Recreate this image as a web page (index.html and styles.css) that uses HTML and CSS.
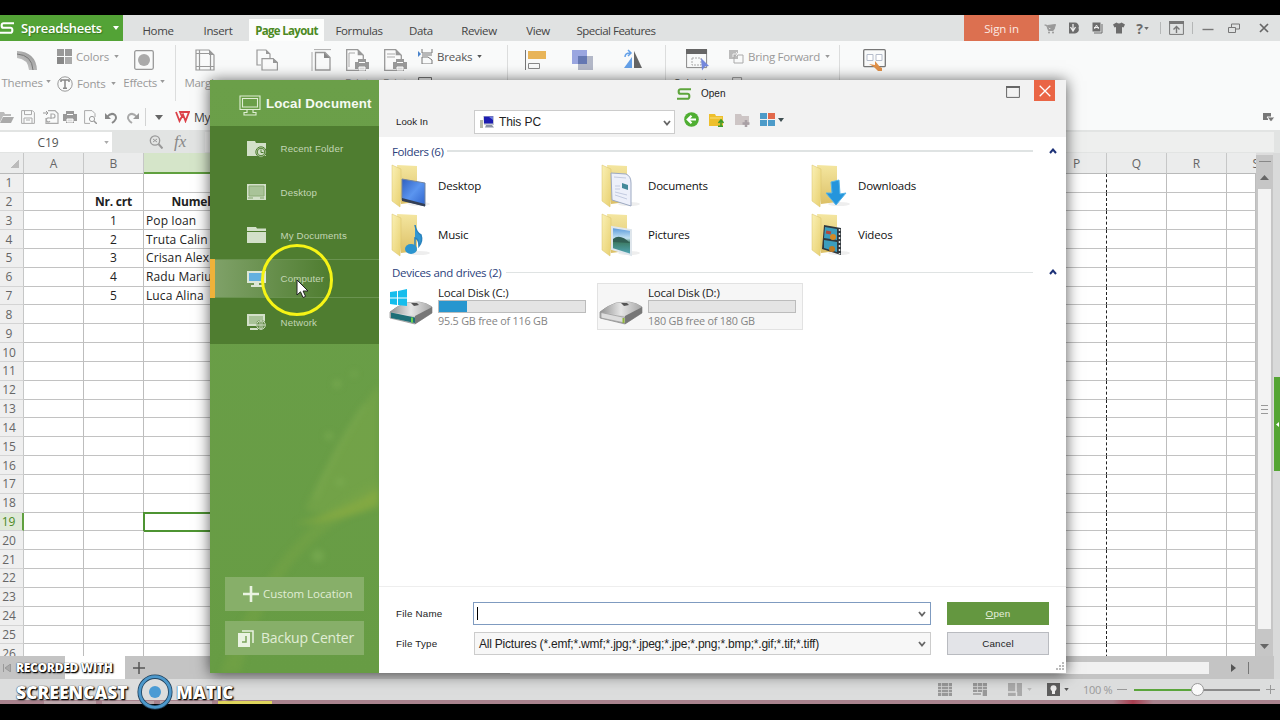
FILE: index.html
```html
<!DOCTYPE html>
<html lang="en">
<head>
    <meta charset="UTF-8">
    <meta name="viewport" content="width=device-width, initial-scale=1.0">
    <title>Spreadsheets</title>
    <link rel="stylesheet" href="styles.css">
</head>
<body>

<!-- shared symbols and gradients -->
<svg class="defs" width="0" height="0">
    <defs>
        <linearGradient id="gFront" x1="0" x2="1" y1="0" y2="1"><stop offset="0" stop-color="#faf0b4"/><stop offset="1" stop-color="#e8d070"/></linearGradient>
        <linearGradient id="gBack" x1="0" x2="0" y1="0" y2="1"><stop offset="0" stop-color="#f4e6a0"/><stop offset="1" stop-color="#dcc066"/></linearGradient>
        <linearGradient id="gScreen" x1="0" x2="1" y1="0" y2="1"><stop offset="0" stop-color="#2f5fc0"/><stop offset=".5" stop-color="#5b95ef"/><stop offset="1" stop-color="#2e63cc"/></linearGradient>
        <linearGradient id="gPic" x1="0" x2="0" y1="0" y2="1"><stop offset="0" stop-color="#4f92d8"/><stop offset=".4" stop-color="#c3e2f2"/><stop offset=".55" stop-color="#3d7c66"/><stop offset="1" stop-color="#52a9bd"/></linearGradient>
        <linearGradient id="gDisk" x1="0" x2="1" y1="0" y2="1"><stop offset="0" stop-color="#8d8d8d"/><stop offset=".5" stop-color="#dedede"/><stop offset="1" stop-color="#8f8f8f"/></linearGradient>
        <linearGradient id="gTop" x1="0" x2="1" y1="0" y2="0"><stop offset="0" stop-color="#8f8f8f"/><stop offset=".5" stop-color="#e6e6e6"/><stop offset="1" stop-color="#a5a5a5"/></linearGradient>
        <linearGradient id="gTheme" x1="0" x2="1" y1="1" y2="0"><stop offset="0" stop-color="#ddd"/><stop offset="1" stop-color="#888"/></linearGradient>
        <symbol id="folder" viewBox="0 0 42 46">
            <ellipse cx="28" cy="41" rx="11" ry="2" fill="#eee"/>
            <path d="M6 2l20 1v36l-16 2z" fill="url(#gBack)"/>
            <path d="M1 2l9 4v22l-1 16-8-6z" fill="url(#gFront)" stroke="#d9c36a" stroke-width=".5"/>
        </symbol>
        <symbol id="disk" viewBox="0 0 44 24">
            <path d="M1 11Q8 5 17 2l13-1q8 1 13 5v6L26 23 1 17z" fill="url(#gDisk)" stroke="#777" stroke-width=".6"/>
            <path d="M1 11Q8 5 17 2l13-1q8 1 13 5L26 15z" fill="url(#gTop)"/>
            <path d="M22 2h6l2 2-5 1z" fill="#555"/>
            <path d="M26 15l17-9v6L26 23z" fill="#777"/>
        </symbol>
        <symbol id="printer" viewBox="0 0 14 12">
            <path d="M3 0h8v3h3v7h-3v2H3v-2H0V3h3z" fill="#999"/><path d="M4 3.500h6M4 8h6v3H4z" stroke="#fff" fill="#ddd"/>
        </symbol>
        <symbol id="page" viewBox="0 0 18 22">
            <path d="M.7.7h11l5.600 5.600v15H.7z" fill="#fafafa" stroke="#999" stroke-width="1.300"/><path d="M11.700.7v5.600h5.600z" fill="#999"/>
        </symbol>
        <symbol id="wps" viewBox="0 0 14 12"><path d="M14 1.300H3.500a1.800 1.800 0 0 0-1.800 1.800V4a1.800 1.800 0 0 0 1.800 1.800h7A1.800 1.800 0 0 1 12.300 7.600v1.300a1.800 1.800 0 0 1-1.800 1.800H0" fill="none" stroke="currentColor" stroke-width="2.100"/></symbol>
        <symbol id="down" viewBox="0 0 6 4"><path d="M0 0h6L3 4z" fill="currentColor"/></symbol>
        <symbol id="chev" viewBox="0 0 8 6"><path d="M1 1l3 3.500L7 1" fill="none" stroke="currentColor" stroke-width="1.800"/></symbol>
    </defs>
</svg>

<div class="app">

    <!-- title bar with tabs -->
    <div class="titlebar">
        <div class="brand"><svg class="brand-logo" width="14" height="12"><use href="#wps"/></svg><span>Spreadsheets</span><svg class="brand-arrow" width="6" height="4"><use href="#down"/></svg></div>
        <div class="tabs">
            <span class="tab">Home</span>
            <span class="tab">Insert</span>
            <span class="tab active">Page Layout</span>
            <span class="tab">Formulas</span>
            <span class="tab">Data</span>
            <span class="tab">Review</span>
            <span class="tab">View</span>
            <span class="tab">Special Features</span>
        </div>
        <div class="signin">Sign in</div>
        <div class="tools">
            <svg width="12" height="12" viewBox="0 0 12 12"><path d="M.5 3h2l2 5.500h5M3.500 3.500l8-1-1.500 5H4.800z" fill="#999" stroke="#999"/><circle cx="5" cy="10.500" r="1" fill="#999"/><circle cx="9" cy="10.500" r="1" fill="#999"/></svg>
            <svg width="11" height="12" viewBox="0 0 11 12"><path d="M1 .5h5a4 4 0 0 1 4.500 5.500A4 4 0 0 1 6 11.500H1z" fill="#6c6c6c"/><path d="M5 2v7M2.500 5L5 9l2.500-4" stroke="#eee" fill="none" stroke-width="1.300"/></svg>
            <svg width="11" height="12" viewBox="0 0 11 12"><path d="M.5.5h8v9h-8z" fill="#6c6c6c"/><path d="M10 2v9H2" stroke="#6c6c6c" fill="none"/><path d="M2.500 7l2-4 2 4M2 5.500h5" stroke="#eee" fill="none"/></svg>
            <svg width="12" height="12" viewBox="0 0 12 12"><path d="M3.500.5Q6 2.500 8.500.5L12 2.500 10.500 5.500 9 5v6.500H3V5l-1.500.5L0 2.500z" fill="#6c6c6c"/></svg>
            <span class="help">?<svg width="5" height="3"><use href="#down"/></svg></span>
            <i></i>
            <svg width="15" height="14" viewBox="0 0 15 14"><path d="M.6.6h13.800v12.800H.6z" fill="none" stroke="#777"/><path d="M0 0h15v3H0z" fill="#777"/><path d="M7.500 12V5.500M4.500 8.500l3-3 3 3" fill="none" stroke="#777" stroke-width="1.400"/></svg>
            <i></i>
            <svg width="12" height="12" viewBox="0 0 12 12"><path d="M.5 7.500h11" stroke="#777" stroke-width="1.400"/></svg>
            <svg width="12" height="12" viewBox="0 0 12 12"><path d="M.5 5.500h7v5h-7zM3.500 5V2h8v5H8" fill="none" stroke="#777"/></svg>
            <svg width="10" height="10" viewBox="0 0 10 10"><path d="M1 1l8 8M9 1L1 9" stroke="#666" stroke-width="1.700"/></svg>
        </div>
    </div>

    <!-- ribbon -->
    <div class="ribbon">
        <div class="big themes"><svg width="22" height="22" viewBox="0 0 22 22"><path d="M1 2q19 1 20 19h-8Q12 10 1 9z" fill="url(#gTheme)"/><path d="M1 5q15 1 16 16" stroke="#777" fill="none" stroke-width="1"/></svg><span>Themes <svg width="5" height="3"><use href="#down"/></svg></span></div>
        <div class="stack">
            <span><svg width="15" height="15" viewBox="0 0 15 15"><path d="M0 0h7v7H0zM8 0h7v7H8z" fill="#999"/><path d="M0 8h7v7H0z" fill="#888"/><path d="M8 8h7v7H8z" fill="#aaa"/></svg>Colors <svg width="5" height="3"><use href="#down"/></svg></span>
            <span><svg width="16" height="16" viewBox="0 0 16 16"><circle cx="8" cy="8" r="7.200" fill="none" stroke="#999"/><path d="M4 6V4h8v2M8 4v8M6 12.200h4" fill="none" stroke="#888" stroke-width="1.500"/></svg>Fonts <svg width="5" height="3"><use href="#down"/></svg></span>
        </div>
        <div class="big"><svg width="20" height="22" viewBox="0 0 20 22"><rect x=".7" y="1.700" width="18.600" height="18.600" rx="1.500" fill="none" stroke="#999" stroke-width="1.300"/><circle cx="10" cy="11" r="6" fill="#aaa"/></svg><span>Effects <svg width="5" height="3"><use href="#down"/></svg></span></div>
        <i></i>
        <div class="big"><svg width="20" height="22" viewBox="0 0 20 22"><path d="M1 1h13l5 5v15H1zM4.500 1v20M15.500 5v16M1 4.500h14M1 17.500h18" fill="none" stroke="#999" stroke-width="1.200"/><path d="M14 1v5h5z" fill="#999"/></svg><span>Margins</span></div>
        <div class="big"><svg width="22" height="22" viewBox="0 0 22 22"><path d="M5 16H1V1h9l4 4v4" fill="none" stroke="#999" stroke-width="1.200"/><path d="M6 9.600h11l4.400 4V21H6z" fill="#fafafa" stroke="#999" stroke-width="1.200"/><path d="M17 9v5h5zM10 1v4h4z" fill="#999"/></svg></div>
        <div class="big"><svg width="20" height="22" viewBox="0 0 20 22"><path d="M1 3v19M3 .6h17" stroke="#aaa"/><path d="M4.500 3.500H14l5 5V21H4.500z" fill="none" stroke="#999" stroke-width="1.300"/><path d="M13 3.500V9h6z" fill="#888"/></svg></div>
        <div class="big"><svg width="23" height="22" viewBox="0 0 23 22"><use href="#page" width="18" height="22"/><path d="M3 4v14M3 4h6" stroke="#aaa" fill="none"/><use href="#printer" x="9" y="10" width="14" height="12"/></svg><span>Print</span></div>
        <div class="big"><svg width="23" height="22" viewBox="0 0 23 22"><use href="#page" width="18" height="22"/><path d="M3 5h8M3 8h8" stroke="#aaa"/><use href="#printer" x="9" y="10" width="14" height="12"/></svg><span>Print</span></div>
        <div class="stack dark">
            <span><svg width="15" height="15" viewBox="0 0 15 15"><path d="M4 0v4h10V0M4 15V8h6l4 3v4zM4 6h10" fill="none" stroke="#777"/><path d="M0 2l3 3-3 3z" fill="#4a84cc"/></svg>Breaks <svg width="5" height="3"><use href="#down"/></svg></span>
            <span><svg width="14" height="14" viewBox="0 0 14 14"><path d="M.6.6h13v13H.6zM5 4h4M7 3v3" fill="none" stroke="#666"/></svg></span>
        </div>
        <i></i>
        <div class="big"><svg width="22" height="22" viewBox="0 0 22 22"><path d="M1.500 1v20" stroke="#777"/><path d="M4 2h18v8H4z" fill="#e8b458"/><path d="M4.500 14.500h11v5h-11z" fill="none" stroke="#888"/></svg></div>
        <div class="big"><svg width="21" height="22" viewBox="0 0 21 22"><path d="M6 7h15v14H6z" fill="#b3b8c8"/><path d="M0 1h15v14H0z" fill="#9aa6e0"/><path d="M6 7h9v8H6z" fill="#6578b3"/></svg></div>
        <div class="big"><svg width="18" height="22" viewBox="0 0 18 22"><path d="M10 2l8 17h-8z" fill="#666"/><path d="M8 8v11H0z" fill="#64a0e8"/><path d="M1 8q0-4 5-4M4 1l3 3-3 3" fill="none" stroke="#64a0e8" stroke-width="1.500"/></svg></div>
        <i></i>
        <div class="big sel"><svg width="23" height="22" viewBox="0 0 23 22"><path d="M.6.6h20v18H.6z" fill="none" stroke="#888"/><path d="M0 0h21v5H0z" fill="#666"/><path d="M6 9h9v7H6z" fill="none" stroke="#aaa" stroke-dasharray="2 1"/><path d="M15 9l8 8-4 .5-3 4z" fill="#7488dd"/></svg><span>Selection</span></div>
        <div class="stack bring">
            <span><svg width="15" height="14" viewBox="0 0 15 14"><path d="M0 0h9v9H0z" fill="#bbb"/><path d="M5 5h9v8H5z" fill="none" stroke="#aaa"/><path d="M4 7V4h5M7 2l2 2-2 2" stroke="#eee" fill="none"/></svg>Bring Forward <svg width="5" height="3"><use href="#down"/></svg></span>
            <span><svg width="14" height="14" viewBox="0 0 14 14"><path d="M3.600.6h9v13h-9z" fill="none" stroke="#999"/></svg></span>
        </div>
        <i></i>
        <div class="big"><svg width="23" height="22" viewBox="0 0 23 22"><rect x=".7" y=".7" width="21.600" height="17" rx="1" fill="none" stroke="#777" stroke-width="1.300"/><path d="M4 5.500h6v6H4zM13 5.500h6v6h-6z" fill="#fff" stroke="#b5bccb"/><path d="M6 15l6 1 0-4 5 6 2 1v3h-4l-4-4z" fill="#e09048"/></svg></div>
    </div>

    <!-- quick access -->
    <div class="quick">
        <svg width="15" height="12" viewBox="0 0 15 12"><path d="M0 1h5l1 2h6v2H4l-3 6H0z" fill="#bbb"/><path d="M4 6h11l-3 6H1z" fill="#aaa"/></svg>
        <svg width="14" height="14" viewBox="0 0 14 14"><path d="M.6.6h10.800l2 2v10.800H.6zM3.500.6v4h7v-4M3 13V8h8v5M5 10h4" fill="none" stroke="#aaa"/></svg>
        <svg width="16" height="14" viewBox="0 0 16 14"><path d="M5 .6h7l3 3v9.800H3V8M8 9V4h2a2 2 0 0 1 0 4H6a2 2 0 1 0 1 3" fill="none" stroke="#aaa" stroke-width="1.200"/><path d="M0 3h5M3 1l2 2-2 2" stroke="#999" fill="none"/></svg>
        <svg width="14" height="12"><use href="#printer"/></svg>
        <svg width="13" height="14" viewBox="0 0 13 14"><path d="M6 13.400H.6V.6H8l3 3V7" fill="none" stroke="#aaa"/><circle cx="8" cy="9" r="2.600" fill="none" stroke="#999"/><path d="M10 11l3 3" stroke="#999" stroke-width="1.500"/></svg>
        <svg width="13" height="13" viewBox="0 0 13 13"><path d="M2 6q4-5 8-2 3 4-3 8" fill="none" stroke="#888" stroke-width="2"/><path d="M0 2v6h6z" fill="#888"/></svg>
        <svg width="13" height="13" viewBox="0 0 13 13"><path d="M11 6Q7 1 3 4q-3 4 3 8" fill="none" stroke="#aaa" stroke-width="2"/><path d="M13 2v6H7z" fill="#999"/></svg>
        <i></i>
        <svg class="q-arrow" width="8" height="5" viewBox="0 0 8 5"><path d="M0 0h8L4 5z" fill="#666"/></svg>
        <svg width="15" height="12" viewBox="0 0 15 12"><path d="M1 1l3.500 9L8 3.500 10.500 10 14 1H5l2.500 6" fill="none" stroke="#dc4149" stroke-width="1.800"/></svg>
        <span class="my">My WPS</span>
        <svg class="q-end" width="12" height="9" viewBox="0 0 12 9"><path d="M0 0h8v4H5v3H0z" fill="#777"/><path d="M4 4h8L8 9z" fill="#777" stroke="#fafafa"/></svg>
    </div>

    <!-- formula bar -->
    <div class="formula">
        <div class="namebox"><span>C19</span><svg width="5" height="3"><use href="#down"/></svg></div>
        <svg class="f-zoom" width="14" height="14" viewBox="0 0 14 14"><circle cx="6" cy="5.500" r="4.700" fill="none" stroke="#999" stroke-width="1.300"/><path d="M9.500 9l4 4.500" stroke="#999" stroke-width="2"/><path d="M4 4l4 3M8 4L4 7" stroke="#999"/></svg>
        <span class="fx">fx</span>
        <div class="f-input"></div>
    </div>

    <!-- sheet -->
    <div class="workspace">
        <div class="sheet" id="sheet"></div>
        <div class="vscroll">
            <div class="v-top"><hr><svg width="9" height="5" viewBox="0 0 9 5"><path d="M0 5h9L4.500 0z" fill="#666"/></svg></div>
            <div class="v-thumb"><b></b><b></b><b></b></div>
            <div class="v-bottom"><svg width="9" height="5" viewBox="0 0 9 5"><path d="M0 0h9L4.500 5z" fill="#666"/></svg></div>
        </div>
        <div class="side-panel"><div class="handle"><svg width="3" height="5" viewBox="0 0 3 5"><path d="M3 0v5L0 2.500z" fill="#fff"/></svg></div></div>
    </div>

    <div class="sheetbar">
        <svg class="first" width="8" height="8" viewBox="0 0 8 8"><path d="M.5 0v8M7.500 0v8L2 4z" stroke="#999" fill="#aaa"/></svg>
        <div class="sheet-tab"></div>
        <svg class="plus" width="12" height="12" viewBox="0 0 12 12"><path d="M6 0v12M0 6h12" stroke="#555" stroke-width="1.500"/></svg>
        <div class="hscroll"></div>
        <svg class="h-right" width="5" height="8" viewBox="0 0 5 8"><path d="M0 0v8l5-4z" fill="#555"/></svg>
        <i></i>
    </div>

    <div class="status">
        <svg width="14" height="13" viewBox="0 0 14 13"><path d="M0 0h14v13H0z" fill="#999"/><path d="M0 3.500h14M0 9.500h14M0 6.500h14M3.500 0v13M10.500 0v13" stroke="#d4d4d4" stroke-width=".8"/></svg>
        <svg width="14" height="13" viewBox="0 0 14 13"><path d="M0 0h14v13H9V9H0z" fill="#999"/><path d="M0 3.500h14M0 6.500h14M4.500 0v9M9.500 0v13" stroke="#d4d4d4" stroke-width=".8"/><path d="M0 11h8" stroke="#aaa" stroke-width="2"/></svg>
        <svg width="14" height="13" viewBox="0 0 14 13"><path d="M0 0h14v13H0z" fill="#aaa"/><path d="M0 9h8V0M8.500 9v4" stroke="#e0e0e0" stroke-width="1.500" fill="none"/></svg>
        <svg class="caret light" width="5" height="3"><use href="#down"/></svg>
        <svg width="13" height="13" viewBox="0 0 13 13"><path d="M0 0h13v13H0z" fill="#5e5e5e"/><circle cx="6.500" cy="5.300" r="3" fill="#eee"/><path d="M5 8h3v3H5z" fill="#eee"/></svg>
        <svg class="caret" width="5" height="3"><use href="#down"/></svg>
        <span class="pct">100 %</span>
        <span class="minus"></span>
        <div class="slider"><b></b></div>
        <svg class="zplus" width="9" height="9" viewBox="0 0 9 9"><path d="M4.500 0v9M0 4.500h9" stroke="#999"/></svg>
    </div>
    <div class="taskbar"><b></b><b></b><b></b><b class="yellow"></b><b class="red"></b></div>
</div>

<!-- open dialog -->
<div class="dialog">
    <div class="side">
        <div class="side-head">
            <svg width="22" height="21" viewBox="0 0 22 21"><path d="M1 1h20v13.500H1zM3.500 3.500h15V12h-15zM8 14.500V17.500H5V20h12v-2.500h-3v-3" fill="none" stroke="#dfeed3" stroke-width="1.100"/></svg>
            <span>Local Document</span>
        </div>
        <div class="side-menu">
            <div class="item"><svg width="20" height="18" viewBox="0 0 20 18"><path d="M0 1h8l1 2h10v13H0z" fill="#d3e0c9"/><circle cx="14" cy="12" r="5.200" fill="#cfdec4" stroke="#4f7d30"/><circle cx="14" cy="12" r="3.800" fill="none" stroke="#4f7d30"/><path d="M14 9.500V12.500h2.500" stroke="#4f7d30" fill="none"/></svg><span>Recent Folder</span></div>
            <div class="item"><svg width="20" height="18" viewBox="0 0 20 18"><path d="M0 1h19v16H0z" fill="#d3e0c9"/><path d="M2 3h15v10H2z" fill="#a9c398" stroke="#8cab77"/><path d="M1 15h5M13 15h4" stroke="#7ea168"/></svg><span>Desktop</span></div>
            <div class="item"><svg width="20" height="18" viewBox="0 0 20 18"><path d="M0 1h9l1 1.500h9V5H0zM0 6h19v11H0z" fill="#d3e0c9"/></svg><span>My Documents</span></div>
            <div class="item on"><svg width="20" height="18" viewBox="0 0 20 18"><path d="M0 1h19v12H0z" fill="#dde6d6"/><path d="M2 3h15v8H2z" fill="#62b0e0"/><path d="M7 13h5v2h3v2H4v-2h3z" fill="#dde6d6"/></svg><span>Computer</span></div>
            <div class="item"><svg width="20" height="18" viewBox="0 0 20 18"><path d="M0 1h18v12H0z" fill="#d3e0c9"/><path d="M2 3h14v8H2z" fill="#a9c398"/><path d="M3 15h8v2H3z" fill="#d3e0c9"/><circle cx="14" cy="12" r="5" fill="#4f7d30"/><circle cx="14" cy="12" r="4.300" fill="none" stroke="#d3e0c9"/><path d="M10 12h8M14 8v8" stroke="#d3e0c9"/><ellipse cx="14" cy="12" rx="2" ry="4.300" fill="none" stroke="#d3e0c9" stroke-width=".7"/></svg><span>Network</span></div>
        </div>
        <div class="side-body">
            <svg class="leaf" viewBox="0 0 169 329" preserveAspectRatio="none">
                <path d="M10 329Q60 190 169 135V160Q70 190 30 329z" fill="#82a946" opacity=".3"/>
                <path d="M169 40Q130 90 95 165Q120 180 169 150z" fill="#7ba84a" opacity=".5"/>
                <path d="M155 60Q125 105 105 155" stroke="#8bb65a" stroke-width="2.500" fill="none" opacity=".45"/>
                <path d="M169 144Q140 165 85 180Q130 178 169 162z" fill="#8aac42" opacity=".7"/>
                <g fill="#8ab85c" opacity=".4"><circle cx="127" cy="40" r="4"/><circle cx="144" cy="30" r="3"/><circle cx="119" cy="92" r="4"/><circle cx="130" cy="138" r="4"/><circle cx="108" cy="212" r="6"/></g>
            </svg>
            <div class="side-btn"><svg width="16" height="16" viewBox="0 0 16 16"><path d="M8 0v16M0 8h16" stroke="#eaf3e2" stroke-width="2.600"/></svg><span>Custom Location</span></div>
            <div class="side-btn backup"><svg width="16" height="17" viewBox="0 0 16 17"><path d="M0 3h12v14H0z" fill="#eaf3e2"/><path d="M4 1h11v12" fill="none" stroke="#eaf3e2" stroke-width="1.500"/><path d="M8 6v6H4" stroke="#7ba55c" fill="none" stroke-width="1.500"/></svg><span>Backup Center</span></div>
        </div>
    </div>

    <div class="main">
        <div class="d-title"><svg width="14" height="12"><use href="#wps"/></svg><span>Open</span></div>
        <svg class="d-max" width="14" height="12" viewBox="0 0 14 12"><path d="M.6.6h12.800v10.800H.6z" fill="none" stroke="#666"/><path d="M0 1h14" stroke="#666" stroke-width="2"/></svg>
        <div class="d-close"><svg width="12" height="12" viewBox="0 0 12 12"><path d="M.7.7l10.600 10.600M11.300.7L.7 11.300" stroke="#fff" stroke-width="1.300"/></svg></div>
        <div class="look">
            <label>Look In</label>
            <div class="combo pc"><svg width="15" height="14" viewBox="0 0 15 14"><path d="M0 5h3v8H0z" fill="#b5b9a8"/><path d="M3 1h11v9H4z" fill="#c5c9d2"/><path d="M4 1.500h9v7H4z" fill="#1d1db0"/><path d="M9 2h4v3z" fill="#6a7be0"/><path d="M6 10h6l2 2.500H5z" fill="#8a92a5"/></svg><span>This PC</span><svg class="chev" width="8" height="6"><use href="#chev"/></svg></div>
            <svg class="l1" width="15" height="15" viewBox="0 0 15 15"><circle cx="7.500" cy="7.500" r="7.300" fill="#4fae32"/><path d="M12 7.500H4M7.500 3.700L3.700 7.500l3.800 3.800" stroke="#fff" stroke-width="2.200" fill="none"/></svg>
            <svg class="l2" width="15" height="14" viewBox="0 0 15 14"><path d="M0 1h6l1 2h7v10H0z" fill="#eebf2c"/><path d="M1 5h12" stroke="#fae07a"/><path d="M9 13.200h5M12 13V8M9.500 10L12 7l2.500 3" stroke="#3b9a2b" stroke-width="1.600" fill="none"/></svg>
            <svg class="l3" width="15" height="14" viewBox="0 0 15 14"><path d="M0 1h6l1 2h7v9H0z" fill="#cdc5c5"/><path d="M11 7v7M7.500 10.500h7" stroke="#a9a0a5" stroke-width="2.500"/></svg>
            <svg class="l4" width="15" height="13" viewBox="0 0 15 13"><path d="M0 0h7v6H0zM0 7h7v6H0zM8 7h7v6H8z" fill="#4d9bc9"/><path d="M8 0h7v6H8z" fill="#e2694c"/></svg>
            <svg class="l5" width="6" height="4"><use href="#down"/></svg>
        </div>

        <div class="files">
            <div class="group"><span>Folders (6)</span><hr><svg width="8" height="6" viewBox="0 0 8 6"><path d="M1 5l3-3.500L7 5" fill="none" stroke="#1d3278" stroke-width="2"/></svg></div>
            <div class="folders">
                <div class="entry"><svg width="42" height="46" viewBox="0 0 42 46"><use href="#folder" width="42" height="46"/><path d="M11 16l23 4v23l-23-6z" fill="url(#gScreen)" stroke="#72849f"/><path d="M11 35l23 6v2.500L11 38z" fill="#333f55"/></svg><span>Desktop</span></div>
                <div class="entry"><svg width="42" height="46" viewBox="0 0 42 46"><use href="#folder" width="42" height="46"/><path d="M10 10l15 1q5 2 5 9v23l-19-6z" fill="#edf0fa" stroke="#9ca9c2"/><path d="M13 14l12 1M14 23h5M14 26h5M14 29l12 3M14 32l12 4" stroke="#c3cbe0"/><path d="M21 20l6 2v5l-6-2z" fill="#448a9a"/></svg><span>Documents</span></div>
                <div class="entry"><svg width="42" height="46" viewBox="0 0 42 46"><use href="#folder" width="42" height="46"/><path d="M20 19l8-2 1 14 6-1-10 12-10-12 6 0z" fill="#2595dc" stroke="#54b4e8"/></svg><span>Downloads</span></div>
                <div class="entry"><svg width="42" height="46" viewBox="0 0 42 46"><use href="#folder" width="42" height="46"/><path d="M24 13q1 7 6 10 2 6-2 11 0-7-4-8v12" fill="#3197d2" stroke="#2a82bd" stroke-width="1.500"/><ellipse cx="20" cy="37" rx="6" ry="5" fill="#2b94cf"/></svg><span>Music</span></div>
                <div class="entry"><svg width="42" height="46" viewBox="0 0 42 46"><use href="#folder" width="42" height="46"/><path d="M11 15l19 3v25l-19-6z" fill="url(#gPic)" stroke="#dfe6ec" stroke-width="2"/><path d="M12 27q7-6 17 4l-17-1z" fill="#315f54"/></svg><span>Pictures</span></div>
                <div class="entry"><svg width="42" height="46" viewBox="0 0 42 46"><use href="#folder" width="42" height="46"/><path d="M13 13l17 3v27l-19-6z" fill="#31383d"/><path d="M14 15l12 2v11l-13-2zM13 28l13 2v10l-13-4z" fill="#3c9dbd"/><circle cx="22" cy="25" r="3" fill="#d58a25"/><circle cx="21" cy="37" r="3" fill="#bf7a22"/><path d="M15 20l5 1" stroke="#b3473c" stroke-width="3"/><path d="M28.500 17v25" stroke="#ddd" stroke-width="1.500" stroke-dasharray="2 2"/></svg><span>Videos</span></div>
            </div>
            <div class="group second"><span>Devices and drives (2)</span><hr><svg width="8" height="6" viewBox="0 0 8 6"><path d="M1 5l3-3.500L7 5" fill="none" stroke="#1d3278" stroke-width="2"/></svg></div>
            <div class="drives">
                <div class="drive">
                    <svg width="44" height="36" viewBox="0 0 44 36"><use href="#disk" y="12" width="44" height="24"/><path d="M2 23.500l24 5v5.500L2 29z" fill="#1f6f77"/><path d="M23 28.500v5" stroke="#6bd04e" stroke-width="2"/><path d="M1 3l7-1v6.500H1zM9 2l9-2v8.500H9zM1 9.500h7V16l-7-1zM9 9.500h9V17l-9-1z" fill="#15bdec"/></svg>
                    <div><p>Local Disk (C:)</p><div class="meter"><b style="width:19%"></b></div><small>95.5 GB free of 116 GB</small></div>
                </div>
                <div class="drive hover">
                    <svg width="44" height="36" viewBox="0 0 44 36"><use href="#disk" y="12" width="44" height="24"/><path d="M2 23.500l24 5v5.500L2 29z" fill="#ddd" stroke="#888" stroke-width=".6"/><path d="M24.500 29v5" stroke="#90b83a" stroke-width="2"/></svg>
                    <div><p>Local Disk (D:)</p><div class="meter"></div><small>180 GB free of 180 GB</small></div>
                </div>
            </div>
        </div>

        <div class="d-foot">
            <label>File Name</label>
            <div class="combo name"><b></b><svg class="chev" width="8" height="6"><use href="#chev"/></svg></div>
            <div class="btn ok"><span><u>O</u>pen</span></div>
            <label>File Type</label>
            <div class="combo type"><span>All Pictures (*.emf;*.wmf;*.jpg;*.jpeg;*.jpe;*.png;*.bmp;*.gif;*.tif;*.tiff)</span><svg class="chev" width="8" height="6"><use href="#chev"/></svg></div>
            <div class="btn"><span>Cancel</span></div>
        </div>
        <svg class="grip" width="8" height="8" viewBox="0 0 8 8"><path d="M6 0h2v2H6zM3 3h2v2H3zM6 3h2v2H6zM0 6h2v2H0zM3 6h2v2H3zM6 6h2v2H6z" fill="#bbb"/></svg>
    </div>
</div>

<!-- recorder mark -->
<div class="recorder">
    <p>RECORDED WITH</p>
    <div><span class="left">SCREENCAST</span><svg width="36" height="36" viewBox="0 0 36 36"><circle cx="18" cy="18" r="15.300" fill="none" stroke="#23445f" stroke-width="4.500"/><circle cx="18" cy="18" r="15.300" fill="none" stroke="#4d98cb" stroke-width="2.800"/><circle cx="18" cy="18" r="6" fill="#4a9bd4"/></svg><span>MATIC</span></div>
</div>

<!-- click ring and mouse pointer -->
<div class="ring"></div>
<svg class="pointer" width="13" height="20" viewBox="0 0 13 20"><path d="M1 1v15l3.500-3.200L7 18.500l2.600-1.100-2.500-5.400H12z" fill="#fff" stroke="#222"/></svg>

<script>
    const data = {
        2: ['', 'Nr. crt', 'Numele'],
        3: ['', '1', 'Pop Ioan'],
        4: ['', '2', 'Truta Calin'],
        5: ['', '3', 'Crisan Alex'],
        6: ['', '4', 'Radu Marius'],
        7: ['', '5', 'Luca Alina']
    };
    const cols = ['A', 'B', 'C', '', 'P', 'Q', 'R', 'S'];
    let html = '<div class="row head"><span class="corner"></span>';
    cols.forEach(c => html += `<span class="col${c}">${c === 'C' ? '' : c}</span>`);
    html += '</div>';

    for (let r = 1; r <= 26; r++) {
        html += `<div class="row r${r}"><span class="num">${r}</span>`;
        cols.forEach((c, i) => {
            html += `<span class="cell col${c}">${(data[r] && data[r][i]) || ''}</span>`;
        });
        html += '</div>';
    }
    document.getElementById('sheet').innerHTML = html;
</script>

</body>
</html>
```
FILE: styles.css
```css
* {
    box-sizing: border-box;
}

body {
    margin: 0;
    width: 1280px;
    height: 720px;
    overflow: hidden;
    position: relative;
    background-color: #000;
    padding-top: 15px;
    font-family: "Open Sans", "Noto Sans", sans-serif;
    font-size: 12px;
    color: #444;
}

svg {
    flex: none;
}

p {
    margin: 0;
}

.defs {
    position: absolute;
}

.app {
    height: 689px;
    display: flex;
    flex-direction: column;
    background-color: #f9fafa;
    overflow: hidden;
}

/* title bar */
.titlebar {
    height: 26px;
    flex: none;
    display: flex;
    background-color: #e0e2e2;
}

.brand {
    width: 123px;
    display: flex;
    align-items: center;
    background-color: #53a336;
    color: #fff;
    font-weight: 600;
    font-size: 13px;
    letter-spacing: -0.35px;
    padding-bottom: 1px;
    text-shadow: 1px 1px 1px #3a7a22;
}

.brand-logo {
    margin-right: 7px;
}

.brand-arrow {
    margin-left: auto;
    margin-right: 4px;
}

.tabs {
    display: grid;
    grid-template-columns: 58px 62px 75px 70px 54px 62px 56px 100px;
    padding-left: 6px;
    width: 841px;
}

.tab {
    display: flex;
    align-items: center;
    justify-content: center;
    padding-top: 5px;
    font-size: 11.5px;
    letter-spacing: -0.35px;
    white-space: nowrap;
}

.tab:last-child {
    letter-spacing: -0.5px;
}

.tab.active {
    margin-top: 4px;
    padding-top: 1px;
    background-color: #fcfdfc;
    color: #4c8a24;
    font-weight: 700;
    letter-spacing: -0.7px;
}

.signin {
    width: 75px;
    display: flex;
    align-items: center;
    justify-content: center;
    background-color: #dc7050;
    color: #fbe9e2;
    font-size: 11.5px;
    letter-spacing: -0.1px;
}

.tools {
    flex: 1;
    display: grid;
    grid-template-columns: 21px 26px 22px 22px 25px 11px 20px 12px 20px 32px 27px;
    align-items: center;
    justify-items: center;
}

.tools i {
    width: 1px;
    height: 12px;
    background-color: #b5b7b7;
}

.help {
    display: flex;
    align-items: center;
    gap: 1px;
    font-weight: 700;
    font-size: 14px;
    color: #6c6c6c;
}

/* ribbon */
.ribbon {
    height: 63px;
    flex: none;
    display: grid;
    grid-template-columns: 54px 64px 52px 10px 50px 74px 34px 38px 38px 88px 10px 46px 48px 54px 10px 54px 110px 10px 60px;
    color: #999;
    font-size: 11.5px;
}

.big {
    display: flex;
    flex-direction: column;
    align-items: center;
    padding-top: 8px;
    white-space: nowrap;
    letter-spacing: -0.3px;
}

.big > span {
    margin-top: 4px;
    line-height: 16px;
}

.big > span svg {
    vertical-align: 4px;
}

.sel {
    color: #555;
}

.themes > span {
    margin-left: -2px;
    letter-spacing: -0.2px;
}

.stack {
    padding: 7px 0 0 3px;
    white-space: nowrap;
    letter-spacing: -0.2px;
}

.stack > span {
    display: flex;
    align-items: center;
    gap: 4px;
    height: 17px;
    margin-bottom: 10px;
}

.stack > span svg + svg {
    margin-left: 1px;
}

.dark {
    color: #555;
    padding-left: 4px;
}

.bring {
    padding-left: 5px;
    letter-spacing: -0.3px;
}

.ribbon > i {
    width: 1px;
    height: 56px;
    margin: 4px auto 0;
    background-color: #dcdddd;
}

/* quick access */
.quick {
    height: 26px;
    flex: none;
    display: grid;
    grid-template-columns: 13px 29px 17px 21px 21px 21px 21px 4px 24px 23px 60px 1fr;
    align-items: center;
    justify-items: center;
}

.quick i {
    width: 1px;
    height: 18px;
    background-color: #d2d3d3;
}

.my {
    justify-self: start;
    letter-spacing: -0.3px;
    padding-top: 1px;
}

.q-end {
    justify-self: end;
    margin-right: 5px;
}

/* formula bar */
.formula {
    height: 23px;
    flex: none;
    display: flex;
    align-items: center;
    background-color: #e2e4e3;
}

.namebox {
    width: 112px;
    height: 20px;
    margin-top: 1px;
    display: flex;
    align-items: center;
    background-color: #fff;
    color: #555;
    padding-right: 3px;
    font-size: 12px;
    letter-spacing: -0.1px;
}

.namebox span {
    width: 96px;
    text-align: center;
}

.namebox svg {
    margin-left: auto;
    color: #aaa;
}

.f-zoom {
    margin-left: 37px;
}

.fx {
    width: 42px;
    padding-left: 11px;
    font-family: "Liberation Serif", serif;
    font-style: italic;
    font-size: 17px;
    line-height: 16px;
    color: #888;
}

.f-input {
    width: 1069px;
    height: 20px;
    background-color: #eeefee;
}

/* sheet */
.workspace {
    height: 503px;
    flex: none;
    display: flex;
    overflow: hidden;
}

.sheet {
    width: 1256px;
    overflow: hidden;
    background-color: #fff;
}

.row {
    display: grid;
    grid-template-columns: 24px 60px 60px 100px 803px 60px 60px 60px 29px;
    height: 18.83px;
}

.head {
    height: 20.7px;
    background-color: #ebecec;
    color: #666;
}

.head span {
    display: flex;
    align-items: center;
    justify-content: center;
    padding-top: 1px;
    border-right: 1px solid #c6c7c7;
    border-bottom: 1px solid #b9baba;
    overflow: hidden;
}

.head .colC {
    background-color: #d5e5c9;
    border-bottom: 2px solid #60a03f;
}

.head .corner {
    background: linear-gradient(135deg, transparent 50%, #bbb 50%) 10px 6px / 9px 9px no-repeat;
}

.head .colS {
    justify-content: end;
    border-right: 0;
    margin-right: -3px;
}

.num {
    display: flex;
    align-items: center;
    justify-content: center;
    background-color: #efefef;
    color: #666;
    padding-right: 5px;
    border-right: 1px solid #c6c7c7;
    border-bottom: 1px solid #d4d4d4;
    letter-spacing: -0.1px;
}

.cell {
    display: flex;
    align-items: center;
    border-right: 1px solid #bdbdbd;
    border-bottom: 1px solid #c2c2c2;
    color: #222;
    padding-left: 2px;
    white-space: nowrap;
    letter-spacing: 0.1px;
}

.cell.colB {
    justify-content: center;
    padding-left: 0;
}

.cell.colP {
    border-right: 1px dashed #222;
}

.r2 {
    font-weight: 700;
}

.r2 .num {
    font-weight: 400;
}

.r2 .cell {
    letter-spacing: -0.2px;
}

.r2 .colC {
    justify-content: center;
}

.r19 .num {
    background-color: #dfe9d8;
    color: #4c8a24;
    border-right: 2px solid #60a03f;
}

.r19 .colC {
    outline: 2px solid #4e9432;
    outline-offset: -1px;
}

.vscroll {
    width: 17px;
    background-color: #c6c6c6;
    display: flex;
    flex-direction: column;
}

.v-top {
    height: 36px;
    display: flex;
    flex-direction: column;
    align-items: center;
    border-top: 2px solid #ddd;
}

.v-top hr {
    width: 12px;
    margin: 6px 0 13px;
    border: 0;
    border-top: 1px solid #888;
}

.v-thumb {
    height: 440px;
    margin: 0 2px;
    background-color: #f3f3f3;
    display: flex;
    flex-direction: column;
    align-items: center;
    justify-content: center;
    gap: 3px;
}

.v-thumb b {
    width: 7px;
    height: 1px;
    background-color: #999;
}

.v-bottom {
    flex: 1;
    display: flex;
    align-items: center;
    justify-content: center;
    padding-top: 8px;
}

.side-panel {
    width: 7px;
    background-color: #d9dada;
    padding: 224px 0 0 1px;
}

.handle {
    height: 94px;
    display: flex;
    align-items: center;
    justify-content: center;
    background-color: #55a534;
}

.sheetbar {
    height: 23px;
    flex: none;
    display: flex;
    align-items: center;
    background-color: #c4c4c4;
    border-right: 6px solid #d9dada;
}

.first {
    margin: 0 54px 0 3px;
}

.sheet-tab {
    width: 60px;
    height: 23px;
    background-color: #fff;
}

.plus {
    margin-left: 8px;
}

.hscroll {
    margin-left: 365px;
    width: 699px;
    height: 12px;
    background-color: #f1f1f1;
}

.h-right {
    margin-left: 22px;
}

.sheetbar i {
    width: 1px;
    height: 12px;
    margin-left: 12px;
    background-color: #777;
}

.status {
    height: 21px;
    flex: none;
    display: flex;
    align-items: center;
    padding-left: 938px;
    background-color: #dcdddd;
}

.status > svg + svg {
    margin-left: 21px;
}

.status > svg.caret {
    margin-left: 4px;
    color: #555;
}

.status > svg.light {
    margin-left: 5px;
    color: #bbb;
}

.status > svg.light + svg {
    margin-left: 15px;
}

.pct {
    margin-left: 14px;
    width: 32px;
    font-size: 11px;
    letter-spacing: -0.3px;
    color: #999;
    white-space: nowrap;
}

.minus {
    width: 10px;
    height: 1px;
    background-color: #999;
    margin-left: 2px;
}

.slider {
    width: 126px;
    height: 2px;
    margin-left: 7px;
    background: linear-gradient(to right, #5ba53c 57px, #8a8a8a 57px);
}

.slider b {
    display: block;
    width: 13px;
    height: 13px;
    margin: -5.5px 0 0 57px;
    border: 1px solid #999;
    border-radius: 50%;
    background-color: #fafafa;
}

.zplus {
    margin-left: 6px;
}

.taskbar {
    height: 4px;
    flex: none;
    display: flex;
    gap: 6px;
    padding-left: 44px;
    background-color: #a8828d;
}

.taskbar b {
    width: 52px;
    margin-top: 1px;
    background-color: #bba5aa;
}

.taskbar b.yellow {
    width: 54px;
    background-color: #ded45c;
}

.taskbar b.red {
    width: 40px;
    margin: 0 0 0 835px;
    background: linear-gradient(to right, #a8828d, #a83e50, #a8828d);
}

/* dialog */
.dialog {
    position: absolute;
    left: 210px;
    top: 80px;
    width: 856px;
    height: 593px;
    display: flex;
    background-color: #fff;
    box-shadow: 0 1px 14px rgba(0, 0, 0, 0.65);
}

.side {
    width: 169px;
    display: flex;
    flex-direction: column;
    background: linear-gradient(#6b9f49, #679c44);
}

.side-head {
    height: 46px;
    display: flex;
    align-items: center;
    padding-left: 29px;
    color: #f5faf1;
    font-family: "Liberation Sans", Arial, sans-serif;
    font-weight: 700;
    font-size: 13.3px;
    letter-spacing: 0.15px;
    white-space: nowrap;
}

.side-head svg {
    margin-right: 5px;
    margin-top: 4px;
}

.side-menu {
    height: 218px;
    background-color: #4f7d30;
    font-family: "Liberation Sans", Arial, sans-serif;
    font-size: 9.7px;
    color: #c3d6b5;
    display: grid;
    grid-template-rows: repeat(5, 43.4px);
    padding-top: 1px;
    letter-spacing: 0.15px;
}

.item {
    display: flex;
    align-items: center;
    padding-left: 37px;
}

.item span {
    margin-left: 13.500px;
}

.item.on {
    height: 39px;
    margin-top: 2px;
    padding-left: 32px;
    border-left: 5px solid #eeb23a;
    background: linear-gradient(to right, #7fa168, #4f7d30 70%);
    box-shadow: inset 0 1px #6a9350, inset 0 -1px #6a9350;
}

.side-body {
    flex: 1;
    position: relative;
    padding: 233px 15px 0;
    overflow: hidden;
}

.leaf {
    position: absolute;
    left: 0;
    top: 0;
    width: 100%;
    height: 100%;
    filter: blur(3px);
}

.side-btn {
    position: relative;
    height: 34px;
    margin-bottom: 10px;
    display: flex;
    align-items: center;
    padding-left: 18px;
    background-color: #87af69;
    color: #e0edd5;
    font-size: 11.5px;
    letter-spacing: -0.05px;
    white-space: nowrap;
}

.side-btn span {
    margin-left: 4px;
    margin-top: -1px;
}

.backup {
    padding-left: 13px;
    font-size: 14px;
    letter-spacing: -0.2px;
}

.backup span {
    margin-left: 7px;
}

.main {
    flex: 1;
    position: relative;
    display: flex;
    flex-direction: column;
    font-family: "Liberation Sans", Arial, sans-serif;
    color: #222;
}

.d-title {
    height: 26px;
    display: flex;
    align-items: center;
    padding-left: 298px;
    gap: 10px;
    font-size: 10px;
    background-color: #f2f2f2;
}

.d-title svg {
    color: #5ea53c;
    margin-top: 2px;
}

.d-max {
    position: absolute;
    left: 627px;
    top: 6px;
}

.d-close {
    position: absolute;
    left: 655px;
    top: 0;
    width: 21px;
    height: 21px;
    display: flex;
    align-items: center;
    justify-content: center;
    background-color: #ea6545;
}

.look {
    height: 31px;
    display: flex;
    align-items: center;
    padding-left: 17px;
    background-color: #f2f2f2;
    color: #3f4f52;
}

.look label {
    width: 78px;
    font-size: 9.7px;
    color: #222;
}

.combo {
    display: flex;
    align-items: center;
    border: 1px solid #ccc;
    background-color: #fff;
    color: #222;
    font-size: 12px;
    white-space: nowrap;
}

.combo .chev {
    margin-left: auto;
    margin-right: 4px;
    margin-top: 1px;
    color: #666;
}

.pc {
    width: 201px;
    height: 24px;
    margin-top: 1px;
    padding-left: 5px;
}

.pc .chev {
    margin-right: 3px;
}

.pc span {
    margin-left: 4px;
    letter-spacing: -0.1px;
}

.l1 {
    margin: -5px 0 0 9px;
}

.l2 {
    margin: -4px 0 0 10px;
}

.l3 {
    margin: -4px 0 0 11px;
}

.l4 {
    margin: -4px 0 0 10px;
}

.l5 {
    margin: -4px 0 0 3px;
}

.files {
    height: 450px;
    padding: 4px 9px 0 13px;
    font-family: "Open Sans", "Noto Sans", sans-serif;
    font-size: 11.5px;
    letter-spacing: -0.2px;
    border-bottom: 1px solid #eee;
}

.group {
    height: 20px;
    display: flex;
    align-items: center;
    color: #2c3f7c;
    letter-spacing: -0.3px;
}

.group:first-child {
    letter-spacing: -0.4px;
}

.group hr {
    flex: 1;
    margin: 0 16px 0 4px;
    border: 0;
    border-top: 2px solid #dfe3e3;
}

.second {
    margin-top: 3px;
}

.second hr {
    border-top-width: 1px;
    margin-left: 5px;
}

.folders {
    display: grid;
    grid-template-columns: 210px 210px 210px;
    grid-template-rows: 49px 49px;
    color: #111;
}

.entry {
    display: flex;
    align-items: center;
}

.entry svg {
    margin-left: -1px;
}

.entry span {
    margin-left: 5px;
}

.drives {
    display: grid;
    grid-template-columns: 206px 206px;
    column-gap: 4px;
    margin-left: -5px;
}

.drive {
    height: 47px;
    margin-top: 1px;
    display: flex;
    padding: 1px 0 0 1px;
    border: 1px solid transparent;
}

.drive > svg {
    margin-top: 4px;
}

.drive p {
    line-height: 15px;
}

.drive > div {
    margin-left: 5px;
    white-space: nowrap;
}

.drive.hover {
    background-color: #f6f6f6;
    border-color: #e2e2e2;
}

.drive small {
    display: block;
    font-size: 10.8px;
    line-height: 16px;
    color: #848484;
}

.meter {
    width: 148px;
    height: 13px;
    background-color: #e4e4e4;
    border: 1px solid #bcbcbc;
}

.meter b {
    display: block;
    height: 100%;
    background-color: #2796cf;
}

.d-foot {
    display: grid;
    grid-template-columns: 77px 458px 102px;
    grid-template-rows: 23px 23px;
    row-gap: 7px;
    align-items: center;
    padding: 15px 0 0 17px;
    font-size: 9.8px;
    letter-spacing: 0.2px;
}

.name {
    width: 458px;
    height: 23px;
    border-color: #7f9bc0;
}

.name b {
    width: 1px;
    height: 13px;
    margin-left: 3px;
    background-color: #000;
}

.type {
    height: 23px;
    margin-left: 1px;
    padding-left: 4px;
    background-color: #f7f7f7;
    font-size: 12px;
    letter-spacing: -0.21px;
}

.btn {
    width: 102px;
    height: 23px;
    margin-left: 16px;
    margin-top: -1px;
    display: flex;
    align-items: center;
    justify-content: center;
    background-color: #e3e4e8;
    border: 1px solid #b9bbc0;
}

.btn.ok {
    background-color: #649740;
    border-color: #649740;
    color: #e6f0dd;
}

.grip {
    position: absolute;
    right: 2px;
    bottom: 3px;
}

/* recorder mark */
.recorder {
    position: absolute;
    left: 16px;
    top: 659px;
    color: #fff;
    font-weight: 800;
    text-shadow: 0 0 1px #000, 1px 1px 1px #000, 1px 1px 2px #333;
}

.recorder p {
    font-size: 12px;
    line-height: 18px;
    letter-spacing: -0.3px;
}

.recorder div {
    display: flex;
    align-items: center;
    font-size: 17.5px;
    line-height: 20px;
    margin-top: -3px;
}

.recorder svg {
    margin: 0 3px 0 3px;
}

.left {
    width: 118px;
}

.ring {
    position: absolute;
    left: 261px;
    top: 244px;
    width: 72px;
    height: 72px;
    border: 3px solid #f6f416;
    border-radius: 50%;
}

.pointer {
    position: absolute;
    left: 296px;
    top: 279px;
}
```
